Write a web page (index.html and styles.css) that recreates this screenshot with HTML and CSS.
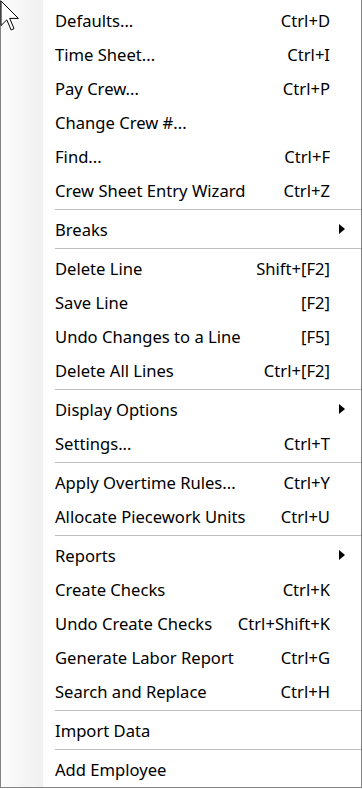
FILE: index.html
```html
<!DOCTYPE html>
<html>
<head>
<meta charset="utf-8">
<link rel="stylesheet" href="styles.css">
</head>
<body>
<div class="menu">
  <div class="item"><span class="label">Defaults...</span><span class="key">Ctrl+D</span></div>
  <div class="item"><span class="label">Time Sheet...</span><span class="key">Ctrl+I</span></div>
  <div class="item"><span class="label">Pay Crew...</span><span class="key">Ctrl+P</span></div>
  <div class="item"><span class="label">Change Crew #...</span></div>
  <div class="item"><span class="label">Find...</span><span class="key">Ctrl+F</span></div>
  <div class="item"><span class="label">Crew Sheet Entry Wizard</span><span class="key">Ctrl+Z</span></div>
  <div class="sep"></div>
  <div class="item"><span class="label">Breaks</span><span class="arrow"></span></div>
  <div class="sep"></div>
  <div class="item"><span class="label">Delete Line</span><span class="key">Shift+[F2]</span></div>
  <div class="item"><span class="label">Save Line</span><span class="key">[F2]</span></div>
  <div class="item"><span class="label">Undo Changes to a Line</span><span class="key">[F5]</span></div>
  <div class="item"><span class="label">Delete All Lines</span><span class="key">Ctrl+[F2]</span></div>
  <div class="sep"></div>
  <div class="item"><span class="label">Display Options</span><span class="arrow"></span></div>
  <div class="item"><span class="label">Settings...</span><span class="key">Ctrl+T</span></div>
  <div class="sep"></div>
  <div class="item"><span class="label">Apply Overtime Rules...</span><span class="key">Ctrl+Y</span></div>
  <div class="item"><span class="label">Allocate Piecework Units</span><span class="key">Ctrl+U</span></div>
  <div class="sep"></div>
  <div class="item"><span class="label">Reports</span><span class="arrow"></span></div>
  <div class="item"><span class="label">Create Checks</span><span class="key">Ctrl+K</span></div>
  <div class="item"><span class="label">Undo Create Checks</span><span class="key">Ctrl+Shift+K</span></div>
  <div class="item"><span class="label">Generate Labor Report</span><span class="key">Ctrl+G</span></div>
  <div class="item"><span class="label">Search and Replace</span><span class="key">Ctrl+H</span></div>
  <div class="sep"></div>
  <div class="item"><span class="label">Import Data</span></div>
  <div class="sep"></div>
  <div class="item"><span class="label">Add Employee</span></div>
</div>
<svg class="cursor" width="20" height="31" viewBox="0 0 20 31">
  <polygon points="1,1 1,25.5 6.8,19.9 11.2,30 14,28.6 9.7,18.4 18.4,18.4" fill="#fff" stroke="#000" stroke-width="1" stroke-linejoin="miter"/>
</svg>
</body>
</html>
```
FILE: styles.css
```css
html, body {
  margin: 0;
  padding: 0;
  background: #fff;
}
body {
  width: 362px;
  height: 789px;
  overflow: hidden;
  position: relative;
}
.menu {
  box-sizing: border-box;
  width: 362px;
  height: 788px;
  border: 1px solid #838383;
  border-top: none;
  padding-top: 3px;
  background: linear-gradient(to right, #fcfcfc 0, #f0f0f0 42px, #fff 42px);
  font-family: "Noto Sans", "Open Sans", sans-serif;
  font-size: 16.6px;
  color: #000;
}
.item {
  display: flex;
  align-items: center;
  height: 34px;
  padding-left: 54px;
}
.label {
  white-space: nowrap;
}
.key {
  margin-left: auto;
  padding-right: 31px;
  white-space: nowrap;
}
.arrow {
  margin-left: auto;
  margin-right: 16px;
  width: 0;
  height: 0;
  border-top: 5px solid transparent;
  border-bottom: 5px solid transparent;
  border-left: 6px solid #000;
}
.sep {
  height: 5px;
  margin-left: 54px;
  display: flex;
  align-items: center;
}
.sep::before {
  content: "";
  display: block;
  width: 100%;
  height: 1px;
  background: #bdbdbd;
}
.cursor {
  position: absolute;
  left: 0;
  top: 0;
}
```
